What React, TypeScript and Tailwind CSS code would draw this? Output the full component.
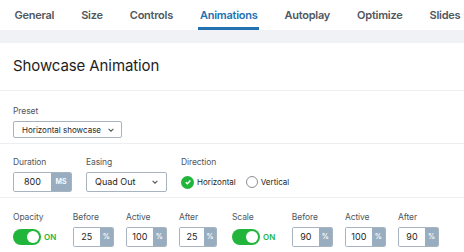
const tabs = ["General", "Size", "Controls", "Animations", "Autoplay", "Optimize", "Slides"];

const Label = ({ children }: { children: React.ReactNode }) => (
  <div className="text-[8.5px] leading-[12px] tracking-[-0.1px] text-[#50575e] mb-[4px]">{children}</div>
);

const UnitInput = ({ value, unit, w, uw }: { value: string; unit: string; w: string; uw: string }) => (
  <div className={`flex h-[20px] ${w} border border-[#a7b4c0] rounded-[2px] overflow-hidden`}>
    <div className="flex-1 flex items-center justify-center text-[9px] text-[#1e1e1e] bg-white">{value}</div>
    <div className={`${uw} flex items-center justify-center bg-[#98aec0] text-white text-[7px] font-semibold`}>{unit}</div>
  </div>
);

const Toggle = () => (
  <div className="flex items-center h-[20px] gap-[3px]">
    <div className="w-[28px] h-[16px] rounded-full bg-[#22b53c] relative">
      <div className="absolute right-[2px] top-[2px] w-[12px] h-[12px] rounded-full bg-white" />
    </div>
    <span className="text-[8px] font-semibold text-[#22b53c]">ON</span>
  </div>
);

const Chevron = () => (
  <svg width="8" height="8" viewBox="0 0 10 10" fill="none" stroke="#50575e" strokeWidth="1.3">
    <path d="M2 3.5l3 3 3-3" />
  </svg>
);

export default function App() {
  return (
    <div className="w-[464px] h-[252px] overflow-hidden bg-white font-['Inter',sans-serif]">
      {/* Tabs */}
      <div className="flex h-[30px] pl-px">
        {tabs.map((t) => (
          <div
            key={t}
            className={`relative px-[13.5px] flex items-center whitespace-nowrap text-[11px] font-semibold tracking-[-0.25px] ${
              t === "Animations" ? "text-[#2271b1]" : "text-[#50575e]"
            }`}
          >
            {t}
            {t === "Animations" && <div className="absolute left-[12px] right-[12px] bottom-0 h-[3px] bg-[#2271b1]" />}
          </div>
        ))}
      </div>
      <div className="h-[13px] bg-[#f0f2f5]" />

      {/* Heading */}
      <div className="h-[48px] flex items-center px-[13px] border-b border-[#eceef1]">
        <h2 className="text-[15px] text-[#1e1e1e] tracking-[-0.1px]">Showcase Animation</h2>
      </div>

      {/* Preset */}
      <div className="h-[53px] px-[13px] pt-[14px] border-b border-[#eceef1]">
        <Label>Preset</Label>
        <div className="w-[109px] h-[17px] border border-[#a7b4c0] rounded-[2px] flex items-center justify-between pl-[8px] pr-[6px] text-[8px] whitespace-nowrap text-[#1e1e1e]">
          <span>Horizontal showcase</span>
          <Chevron />
        </div>
      </div>

      {/* Duration / Easing / Direction */}
      <div className="h-[54px] px-[13px] pt-[12px] flex gap-[14px] border-b border-[#eceef1]">
        <div>
          <Label>Duration</Label>
          <UnitInput value="800" unit="MS" w="w-[59px]" uw="w-[20px]" />
        </div>
        <div>
          <Label>Easing</Label>
          <div className="w-[81px] h-[20px] border border-[#a7b4c0] rounded-[2px] flex items-center justify-between pl-[8px] pr-[7px] text-[9px] text-[#1e1e1e]">
            <span>Quad Out</span>
            <Chevron />
          </div>
        </div>
        <div>
          <Label>Direction</Label>
          <div className="flex items-center h-[20px] text-[8px] text-[#1e1e1e]">
            <div className="w-[13px] h-[13px] rounded-full bg-[#22b53c] flex items-center justify-center">
              <svg width="8" height="8" viewBox="0 0 10 10" fill="none" stroke="white" strokeWidth="1.8">
                <path d="M2.2 5.2l2 2 3.8-4" />
              </svg>
            </div>
            <span className="ml-[3px]">Horizontal</span>
            <div className="ml-[10px] w-[12px] h-[12px] rounded-full border border-[#8c8f94]" />
            <span className="ml-[3px]">Vertical</span>
          </div>
        </div>
      </div>

      {/* Opacity / Scale */}
      <div className="px-[13px] pt-[13px] flex">
        <div className="w-[62px]">
          <Label>Opacity</Label>
          <Toggle />
        </div>
        <div className="w-[55px]">
          <Label>Before</Label>
          <UnitInput value="25" unit="%" w="w-[41px]" uw="w-[13px]" />
        </div>
        <div className="w-[55px]">
          <Label>Active</Label>
          <UnitInput value="100" unit="%" w="w-[41px]" uw="w-[13px]" />
        </div>
        <div className="w-[55px]">
          <Label>After</Label>
          <UnitInput value="25" unit="%" w="w-[38px]" uw="w-[12px]" />
        </div>
        <div className="w-[62px]">
          <Label>Scale</Label>
          <Toggle />
        </div>
        <div className="w-[55px]">
          <Label>Before</Label>
          <UnitInput value="90" unit="%" w="w-[41px]" uw="w-[13px]" />
        </div>
        <div className="w-[55px]">
          <Label>Active</Label>
          <UnitInput value="100" unit="%" w="w-[41px]" uw="w-[13px]" />
        </div>
        <div className="w-[55px]">
          <Label>After</Label>
          <UnitInput value="90" unit="%" w="w-[41px]" uw="w-[13px]" />
        </div>
      </div>
    </div>
  );
}
